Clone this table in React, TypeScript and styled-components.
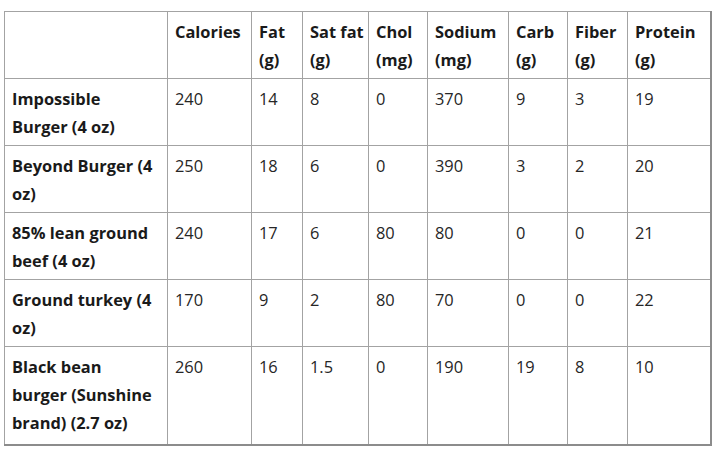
import { createGlobalStyle, styled } from 'styled-components';

const GlobalStyle = createGlobalStyle`
  html, body {
    margin: 0;
    padding: 0;
    background: #ffffff;
  }
  body {
    font-family: "Open Sans", "Noto Sans", sans-serif;
    color: #1f1f1f;
  }
`;

const columns = [163, 84, 51, 66, 59, 81, 59, 60, 83];

const headers: string[][] = [
  [],
  ['Calories'],
  ['Fat', '(g)'],
  ['Sat fat', '(g)'],
  ['Chol', '(mg)'],
  ['Sodium', '(mg)'],
  ['Carb', '(g)'],
  ['Fiber', '(g)'],
  ['Protein', '(g)'],
];

const rows: { name: string[]; values: string[] }[] = [
  { name: ['Impossible', 'Burger (4 oz)'], values: ['240', '14', '8', '0', '370', '9', '3', '19'] },
  { name: ['Beyond Burger (4', 'oz)'], values: ['250', '18', '6', '0', '390', '3', '2', '20'] },
  { name: ['85% lean ground', 'beef (4 oz)'], values: ['240', '17', '6', '80', '80', '0', '0', '21'] },
  { name: ['Ground turkey (4', 'oz)'], values: ['170', '9', '2', '80', '70', '0', '0', '22'] },
  {
    name: ['Black bean', 'burger (Sunshine', 'brand) (2.7 oz)'],
    values: ['260', '16', '1.5', '0', '190', '19', '8', '10'],
  },
];

const Lines = ({ parts }: { parts: string[] }) => (
  <>
    {parts.map((p, i) => (
      <Line key={i}>{p}</Line>
    ))}
  </>
);

const App = () => {
  return (
    <Page>
      <GlobalStyle />
      <Table>
        <colgroup>
          {columns.map((w, i) => (
            <col key={i} style={{ width: w }} />
          ))}
        </colgroup>
        <thead>
          <tr>
            {headers.map((h, i) => (
              <HeadCell key={i}>
                <Lines parts={h} />
              </HeadCell>
            ))}
          </tr>
        </thead>
        <tbody>
          {rows.map((r, i) => (
            <Row key={i} $last={i === rows.length - 1}>
              <NameCell>
                <Lines parts={r.name} />
              </NameCell>
              {r.values.map((v, j) => (
                <Cell key={j}>{v}</Cell>
              ))}
            </Row>
          ))}
        </tbody>
      </Table>
    </Page>
  );
};

export default App;

const Page = styled.main`
  padding: 11px 0 0 4px;
  width: 720px;
  height: 456px;
  box-sizing: border-box;
`;

const Table = styled.table`
  table-layout: fixed;
  width: 707px;
  border-collapse: collapse;
  border-top: 1px solid #5e5e5e;
  border-left: 1px solid #5e5e5e;
  border-right: 2px solid #8c8c8c;
  border-bottom: 2px solid #8c8c8c;
  font-size: 16.4px;
  line-height: 28px;
`;

const Cell = styled.td`
  border: 1px solid #a3a3a3;
  padding: 6px 7px 4px 7px;
  vertical-align: top;
  text-align: left;
  white-space: nowrap;
  font-weight: 400;
  color: #262626;
`;

const HeadCell = styled(Cell).attrs({ as: 'th' })`
  font-weight: 700;
  color: #1a1a1a;
`;

const NameCell = styled(Cell).attrs({ as: 'th' })`
  font-weight: 700;
  color: #1a1a1a;
`;

const Row = styled.tr<{ $last?: boolean }>`
  & > * {
    padding-bottom: ${({ $last }) => ($last ? '7px' : '4px')};
  }
`;

const Line = styled.div`
  white-space: nowrap;
`;
